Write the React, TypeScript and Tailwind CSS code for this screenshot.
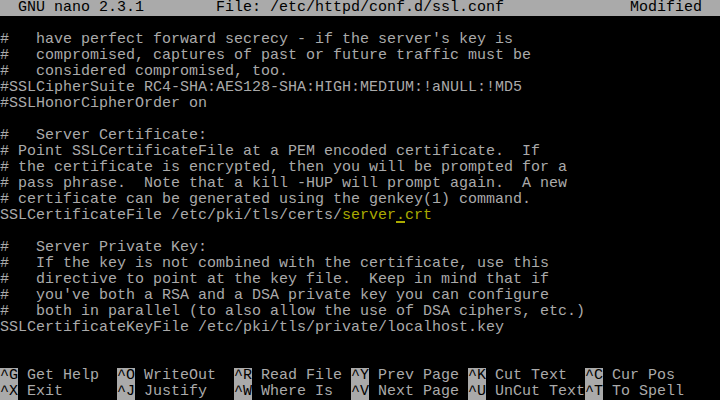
import React from 'react'

const lines: string[] = [
    '',
    '#   have perfect forward secrecy - if the server\'s key is',
    '#   compromised, captures of past or future traffic must be',
    '#   considered compromised, too.',
    '#SSLCipherSuite RC4-SHA:AES128-SHA:HIGH:MEDIUM:!aNULL:!MD5',
    '#SSLHonorCipherOrder on',
    '',
    '#   Server Certificate:',
    '# Point SSLCertificateFile at a PEM encoded certificate.  If',
    '# the certificate is encrypted, then you will be prompted for a',
    '# pass phrase.  Note that a kill -HUP will prompt again.  A new',
    '# certificate can be generated using the genkey(1) command.',
    '__CERT__',
    '',
    '#   Server Private Key:',
    '#   If the key is not combined with the certificate, use this',
    '#   directive to point at the key file.  Keep in mind that if',
    '#   you\'ve both a RSA and a DSA private key you can configure',
    '#   both in parallel (to also allow the use of DSA ciphers, etc.)',
    'SSLCertificateKeyFile /etc/pki/tls/private/localhost.key',
    '',
    '',
]

const shortcuts: [string, string][][] = [
    [['^G', 'Get Help'], ['^O', 'WriteOut'], ['^R', 'Read File'], ['^Y', 'Prev Page'], ['^K', 'Cut Text'], ['^C', 'Cur Pos']],
    [['^X', 'Exit'], ['^J', 'Justify'], ['^W', 'Where Is'], ['^V', 'Next Page'], ['^U', 'UnCut Text'], ['^T', 'To Spell']],
]

function Line({ text }: { text: string }) {
    if (text === '__CERT__') {
        return (
            <div className="h-4 whitespace-pre">
                SSLCertificateFile /etc/pki/tls/certs/
                <span className="text-[#aaaa00]">
                    server
                    <span className="relative">
                        .
                        <span className="absolute left-0 bottom-[1px] w-[9px] h-[2px] bg-[#aaaa00]" />
                    </span>
                    crt
                </span>
            </div>
        )
    }
    return <div className="h-4 whitespace-pre">{text}</div>
}

export default function App() {
    return (
        <div className="w-[720px] h-[400px] bg-black text-[#aaaaaa] text-[15px] leading-4 overflow-hidden" style={{ fontFamily: '"Liberation Mono", "DejaVu Sans Mono", monospace' }}>
            <div className="h-4 bg-[#aaaaaa] text-black whitespace-pre">
                {'  GNU nano 2.3.1        File: /etc/httpd/conf.d/ssl.conf              Modified  '}
            </div>
            {lines.map((l, i) => (
                <Line key={i} text={l} />
            ))}
            {shortcuts.map((row, r) => (
                <div key={r} className="h-4 flex">
                    {row.map(([key, label]) => (
                        <div key={key} className="w-[117px] flex whitespace-pre">
                            <span className="bg-[#aaaaaa] text-black">{key}</span>
                            <span>{' ' + label}</span>
                        </div>
                    ))}
                </div>
            ))}
        </div>
    )
}
